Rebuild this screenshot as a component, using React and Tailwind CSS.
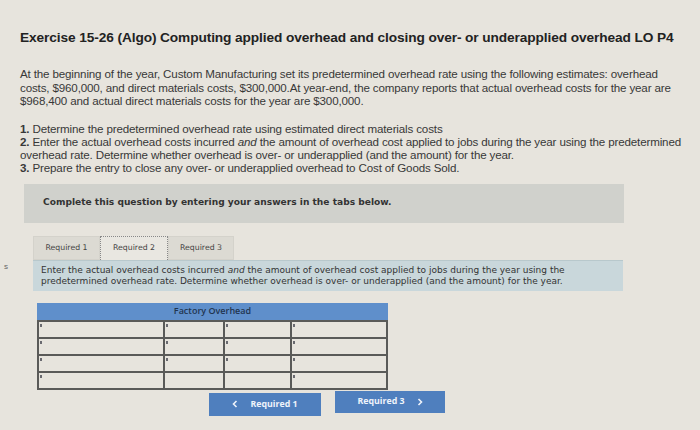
import React from 'react';

const rows = [
  [true, true, true, true],
  [true, true, true, true],
  [true, true, true, true],
  [true, false, false, true],
];

function Cell({ mark, w }) {
  return (
    <div className={`relative h-[15px] border-r-2 border-[#5a5a58] last:border-r-0 ${w}`}>
      {mark && <span className="absolute left-[1px] top-[2px] h-[3px] w-[2px] bg-[#6a6a70]" />}
    </div>
  );
}

function Chevron({ dir }) {
  return (
    <svg width="6" height="8" viewBox="0 0 6 8" fill="none" stroke="currentColor" strokeWidth="1.6">
      {dir === 'left' ? <path d="M4.5 1 L1.5 4 L4.5 7" /> : <path d="M1.5 1 L4.5 4 L1.5 7" />}
    </svg>
  );
}

export default function App() {
  return (
    <div className="w-[700px] h-[430px] overflow-hidden bg-[#e7e4dd] relative font-['Liberation_Sans',sans-serif] text-[#2a2a2a]">
      <span className="absolute left-[4px] top-[261px] text-[8px] text-[#666]">s</span>
      <div className="pl-[20px] pt-[29px]">
        <h1 className="text-[13.7px] font-bold tracking-[-0.1px] text-[#222] leading-[18px] whitespace-nowrap">
          Exercise 15-26 (Algo) Computing applied overhead and closing over- or underapplied overhead LO P4
        </h1>
        <p className="mt-[20px] text-[11.6px] leading-[13.5px] text-[#383838] whitespace-nowrap tracking-[-0.15px]">
          At the beginning of the year, Custom Manufacturing set its predetermined overhead rate using the following estimates: overhead
          <br />
          costs, $960,000, and direct materials costs, $300,000.At year-end, the company reports that actual overhead costs for the year are
          <br />
          $968,400 and actual direct materials costs for the year are $300,000.
        </p>
        <div className="mt-[14px] text-[11.6px] leading-[13.3px] text-[#383838] whitespace-nowrap tracking-[-0.15px]">
          <div><b>1.</b> Determine the predetermined overhead rate using estimated direct materials costs</div>
          <div>
            <b>2.</b> Enter the actual overhead costs incurred <i>and</i> the amount of overhead cost applied to jobs during the year using the predetermined
            <br />
            overhead rate. Determine whether overhead is over- or underapplied (and the amount) for the year.
          </div>
          <div><b>3.</b> Prepare the entry to close any over- or underapplied overhead to Cost of Goods Sold.</div>
        </div>
      </div>

      <div className="ml-[24px] mt-[9px] w-[600px] h-[39px] bg-[#d0d1cc] flex items-center pl-[19px]">
        <span className="font-['DejaVu_Sans',sans-serif] font-bold text-[9.1px] text-[#333]">
          Complete this question by entering your answers in the tabs below.
        </span>
      </div>

      <div className="ml-[33px] mt-[13px] w-[590px]">
        <div className="flex h-[24px] font-['DejaVu_Sans',sans-serif] text-[7.8px] text-[#444]">
          <div className="w-[67px] bg-[#dcdad3] border border-[#d4d2cb] flex items-center justify-center">Required 1</div>
          <div className="w-[68px] bg-[#e9e7e1] border border-dotted border-[#888] border-b-0 flex items-center justify-center">Required 2</div>
          <div className="w-[66px] bg-[#dcdad3] border border-[#d4d2cb] flex items-center justify-center">Required 3</div>
        </div>
        <div className="h-[31px] bg-[#c9d7db] border-t border-[#b8c8cc] pl-[8px] pt-[4px] font-['DejaVu_Sans',sans-serif] text-[9px] leading-[11.5px] text-[#333] whitespace-nowrap">
          Enter the actual overhead costs incurred <i>and</i> the amount of overhead cost applied to jobs during the year using the
          <br />
          predetermined overhead rate. Determine whether overhead is over- or underapplied (and the amount) for the year.
        </div>
      </div>

      <div className="ml-[37px] mt-[12px] w-[351px]">
        <div className="h-[17px] bg-[#5f8fcb] flex items-center justify-center font-['Open_Sans',sans-serif] font-semibold text-[9px] text-[#1f3550]">
          Factory Overhead
        </div>
        <div className="border-2 border-t-0 border-[#5a5a58]">
          {rows.map((r, i) => (
            <div key={i} className="flex border-t-2 border-[#5a5a58]">
              <Cell mark={r[0]} w="w-[126px]" />
              <Cell mark={r[1]} w="w-[60px]" />
              <Cell mark={r[2]} w="w-[67px]" />
              <Cell mark={r[3]} w="flex-1" />
            </div>
          ))}
        </div>
      </div>

      <div className="flex items-start ml-[209px] mt-[2px] gap-[14px] font-['Open_Sans',sans-serif] font-bold text-[8.8px] text-[#eef3fa]">
        <div className="w-[112px] h-[23px] mt-[1px] bg-[#4f7fbe] flex items-center justify-center gap-[12px]">
          <Chevron dir="left" />
          <span>Required 1</span>
        </div>
        <div className="w-[110px] h-[22px] -mt-[1px] bg-[#4f7fbe] flex items-center justify-center gap-[12px]">
          <span>Required 3</span>
          <Chevron dir="right" />
        </div>
      </div>
    </div>
  );
}
